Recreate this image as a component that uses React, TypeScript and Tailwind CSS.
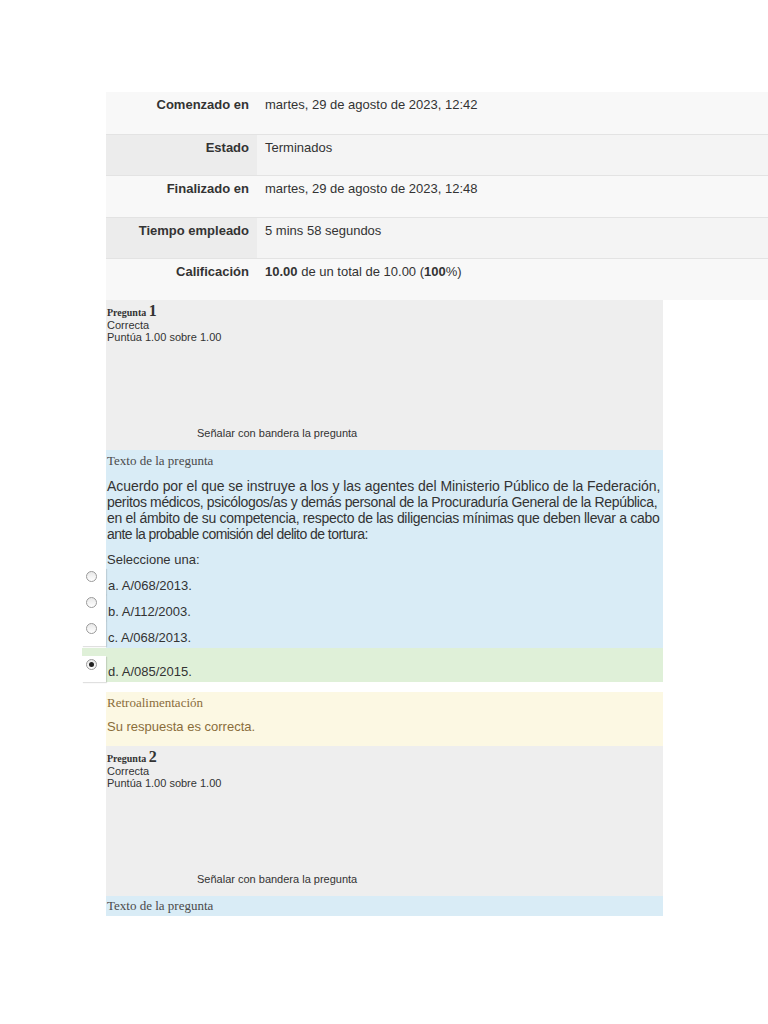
const sans = { fontFamily: '"Liberation Sans", Arial, sans-serif' }

const rows = [
  { label: 'Comenzado en', value: <>martes, 29 de agosto de 2023, 12:42</> },
  { label: 'Estado', value: <>Terminados</> },
  { label: 'Finalizado en', value: <>martes, 29 de agosto de 2023, 12:48</> },
  { label: 'Tiempo empleado', value: <>5 mins 58 segundos</> },
  {
    label: 'Calificación',
    value: (
      <>
        <b>10.00</b> de un total de 10.00 (<b>100</b>%)
      </>
    ),
  },
]

function Radio({ checked }: { checked?: boolean }) {
  return (
    <div className="w-[24px] h-[26px] shrink-0 bg-white shadow-[1px_1px_1px_rgba(0,0,0,0.12)] pl-[4px] pt-[3px]">
      <div className="w-[11px] h-[11px] rounded-full border border-[#9a9a9a] bg-gradient-to-b from-[#e8e8e8] to-white flex items-center justify-center">
        {checked && <div className="w-[5px] h-[5px] rounded-full bg-[#222]" />}
      </div>
    </div>
  )
}

function QuestionInfo({ n }: { n: number }) {
  return (
    <div className="bg-[#eeeeee] h-[150px] flex flex-col px-[1px] pt-[4px]">
      <div className="font-['Liberation_Serif'] text-[#333] leading-[14px] font-bold">
        <span className="text-[10px]">Pregunta </span>
        <span className="text-[16px]">{n}</span>
      </div>
      <div className="text-[11px] leading-[12px] -mt-[1px] text-[#333]">Correcta</div>
      <div className="text-[11px] leading-[12px] text-[#333]">Puntúa 1.00 sobre 1.00</div>
      <div className="mt-auto mb-[11px] ml-[90px] text-[11px] leading-[12px] text-[#333]">
        Señalar con bandera la pregunta
      </div>
    </div>
  )
}

export default function App() {
  return (
    <div className="min-h-[1024px] bg-white pt-[92px] text-[#333]" style={sans}>
      <div className="ml-[106px] text-[13px]">
        {rows.map((r, i) => (
          <div
            key={r.label}
            className={`flex h-[41.6px] ${i > 0 ? 'border-t border-[#e3e3e3]' : ''}`}
          >
            <div
              className={`w-[151px] shrink-0 text-right font-bold pt-[5px] pr-[8px] leading-[16px] ${
                i % 2 === 1 ? 'bg-[#ececec]' : 'bg-[#f8f8f8]'
              }`}
            >
              {r.label}
            </div>
            <div
              className={`flex-1 pt-[5px] pl-[8px] leading-[16px] ${
                i % 2 === 1 ? 'bg-[#f4f4f4]' : 'bg-[#f8f8f8]'
              }`}
            >
              {r.value}
            </div>
          </div>
        ))}
      </div>

      <div className="w-[557px] ml-[106px]">
        <QuestionInfo n={1} />

        <div className="bg-[#d9ecf6] pt-[3px] pb-[2px]">
          <div className="pl-[1px] font-['Liberation_Serif'] text-[13px] leading-[16px] text-[#4a4a4a]">
            Texto de la pregunta
          </div>
          <p className="mt-[9px] pl-[1px] text-[14px] leading-[16px] whitespace-nowrap text-[#333]">
            <span className="tracking-[-0.05px]">
              Acuerdo por el que se instruye a los y las agentes del Ministerio Público de la Federación,
            </span>
            <br />
            <span className="tracking-[-0.35px]">
              peritos médicos, psicólogos/as y demás personal de la Procuraduría General de la República,
            </span>
            <br />
            <span className="tracking-[-0.3px]">
              en el ámbito de su competencia, respecto de las diligencias mínimas que deben llevar a cabo
            </span>
            <br />
            <span className="tracking-[-0.55px]">ante la probable comisión del delito de tortura:</span>
          </p>
          <div className="mt-[10px] pl-[1px] text-[13px] leading-[16px]">Seleccione una:</div>
          <div className="-ml-[24px]">
            {['a. A/068/2013.', 'b. A/112/2003.', 'c. A/068/2013.'].map((t, i) => (
              <div key={i} className="flex h-[26px]">
                <Radio />
                <div className="pt-[10px] pl-[2px] text-[13px] leading-[16px]">{t}</div>
              </div>
            ))}
          </div>
        </div>

        <div className="-ml-[24px] flex bg-[#dff0d8] h-[34px] pt-[8px]">
          <Radio checked />
          <div className="pt-[8px] pl-[2px] text-[13px] leading-[16px]">d. A/085/2015.</div>
        </div>

        <div className="mt-[10px] bg-[#fcf8e3] h-[54px] pt-[3px] pl-[1px] text-[#8a6d3b]">
          <div className="font-['Liberation_Serif'] text-[13px] leading-[16px]">Retroalimentación</div>
          <div className="mt-[8px] text-[13px] leading-[16px]">Su respuesta es correcta.</div>
        </div>

        <QuestionInfo n={2} />
        <div className="bg-[#d9ecf6] h-[20px] pt-[2px] pl-[1px] font-['Liberation_Serif'] text-[13px] leading-[16px] text-[#4a4a4a]">
          Texto de la pregunta
        </div>
      </div>
    </div>
  )
}
